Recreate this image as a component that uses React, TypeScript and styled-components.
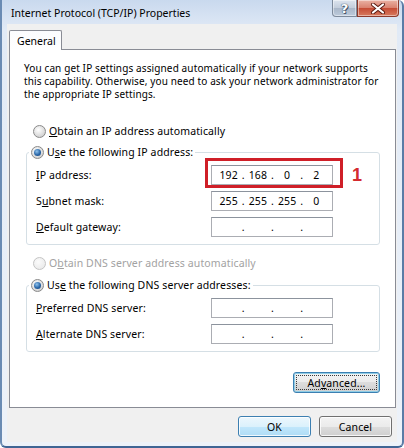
import React from 'react';
import styled, { createGlobalStyle } from 'styled-components';

const GlobalStyle = createGlobalStyle`
  html, body {
    margin: 0;
    padding: 0;
    background: #ffffff;
  }
  body {
    font-family: 'Noto Sans', 'Open Sans', sans-serif;
    font-size: 10px;
    letter-spacing: 0.12px;
    color: #000000;
  }
`;

const Window = styled.div`
  width: 404px;
  height: 448px;
  box-sizing: border-box;
  display: flex;
  flex-direction: column;
  background: linear-gradient(#c9d9ee, #e1eaf6 30px, #edf2f9);
  border-left: 2px solid #6a8bb3;
  border-right: 2px solid #5a7ca6;
  border-bottom: 2px solid #3f6594;
  border-radius: 0 6px 6px 6px;
  overflow: hidden;
`;

const TitleBar = styled.div`
  height: 24px;
  display: flex;
  align-items: flex-start;
`;

const Title = styled.div`
  padding: 6px 0 0 9px;
  line-height: 14px;
  font-size: 10.5px;
  letter-spacing: 0;
  color: #000;
`;

const CaptionButtons = styled.div`
  margin-left: auto;
  margin-right: 3px;
  display: flex;
`;

const CaptionButton = styled.div<{ $kind: 'help' | 'close' }>`
  height: 17px;
  box-sizing: border-box;
  display: flex;
  align-items: center;
  justify-content: center;
  width: ${(p) => (p.$kind === 'help' ? '25px' : '42px')};
  border: 1px solid ${(p) => (p.$kind === 'help' ? '#7d8a9b' : '#8c3a2c')};
  border-top: none;
  border-radius: ${(p) => (p.$kind === 'help' ? '0 0 0 4px' : '0 0 4px 0')};
  background: ${(p) =>
    p.$kind === 'help'
      ? 'linear-gradient(#dce4ee, #c3cddb 50%, #a9b6c8 50%, #bccadb)'
      : 'linear-gradient(#eab2a4, #d9806d 50%, #c54a33 50%, #d77a5e)'};
  box-shadow: inset 0 0 0 1px rgba(255, 255, 255, 0.45);
`;

const HelpGlyph = styled.span`
  font-family: 'DejaVu Sans', sans-serif;
  font-weight: bold;
  font-size: 13px;
  line-height: 13px;
  color: #ffffff;
  text-shadow: 0 0 1px #394a60, 0 0 1px #394a60, 1px 1px 0 #4b5b70;
`;

const Client = styled.div`
  flex: 1;
  margin: 0 5px 4px 5px;
  background: #f0f0f0;
  display: flex;
  flex-direction: column;
  padding: 6px 1px 0 2px;
`;

const TabStrip = styled.div`
  display: flex;
  position: relative;
  z-index: 1;
`;

const Tab = styled.div`
  width: 53px;
  height: 20px;
  box-sizing: border-box;
  border: 1px solid #898c95;
  border-bottom: none;
  border-radius: 2px 2px 0 0;
  background: linear-gradient(#fbfcfe, #ffffff);
  padding: 3px 0 0 7px;
  line-height: 14px;
  font-size: 10.5px;
  letter-spacing: 0;
  margin-bottom: -1px;
`;

const Panel = styled.div`
  height: 359px;
  box-sizing: border-box;
  border: 1px solid #898c95;
  background: #ffffff;
  padding: 12px 15px 0 14px;
  display: flex;
  flex-direction: column;
`;

const Intro = styled.p`
  margin: 0;
  line-height: 13px;
  white-space: nowrap;
`;

const Key = styled.span`
  text-decoration: underline;
  text-underline-offset: 1px;
`;

const RadioRow = styled.label<{ $top: number; $disabled?: boolean }>`
  display: flex;
  align-items: center;
  height: 16px;
  gap: 3px;
  margin: ${(p) => p.$top}px 0 0 9px;
  font-size: 10.5px;
  color: ${(p) => (p.$disabled ? '#a2a2a2' : '#000')};
`;

const Radio = styled.span<{ $checked?: boolean; $disabled?: boolean }>`
  position: relative;
  flex: none;
  width: 13px;
  height: 13px;
  box-sizing: border-box;
  border-radius: 50%;
  border: 1px solid ${(p) => (p.$disabled ? '#c4c4c4' : '#8a8a8a')};
  background: ${(p) =>
    p.$disabled
      ? 'radial-gradient(circle at 40% 35%, #fbfbfb, #e6e6e6)'
      : 'radial-gradient(circle at 40% 35%, #ffffff, #d2d2d2 75%, #c0c0c0)'};

  &::after {
    content: '';
    display: ${(p) => (p.$checked ? 'block' : 'none')};
    position: absolute;
    left: 2px;
    top: 2px;
    width: 7px;
    height: 7px;
    border-radius: 50%;
    background: radial-gradient(circle at 40% 35%, #8fc2ec, #2a67a8 55%, #153f74);
  }
`;

const GroupBox = styled.fieldset<{ $top: number }>`
  margin: ${(p) => p.$top}px 0 0 2px;
  width: 354px;
  box-sizing: border-box;
  border: 1px solid #d5dfe5;
  border-radius: 3px;
  padding: 5px 9px 7px 9px;
  min-width: 0;
`;

const Legend = styled.legend`
  padding: 0 2px;
  margin-left: -7px;
  height: 16px;
  line-height: 16px;
  font-size: 10.5px;
  display: flex;
  align-items: center;
  gap: 3px;
`;

const FieldGrid = styled.div`
  display: grid;
  grid-template-columns: 175px 122px;
  grid-auto-rows: 20px;
  row-gap: 6px;
  align-items: center;
  font-size: 10.5px;
`;

const FieldLabel = styled.span`
  line-height: 14px;
`;

const FieldHolder = styled.div`
  position: relative;
  height: 20px;
`;

const AddressBox = styled.div`
  height: 20px;
  box-sizing: border-box;
  border: 1px solid #abadb3;
  border-top-color: #8c939d;
  background: #ffffff;
  display: flex;
  align-items: center;
  padding: 0 3px 0 4px;
`;

const Octet = styled.span`
  flex: 1;
  text-align: center;
  line-height: 14px;
`;

const Dot = styled.span`
  width: 4px;
  text-align: center;
  line-height: 14px;
`;

const Highlight = styled.div`
  position: absolute;
  left: -6px;
  right: -10px;
  top: -7px;
  bottom: -3px;
  border: 3px solid #cf1f28;
  pointer-events: none;
`;

const Marker = styled.span`
  position: absolute;
  left: 141px;
  top: 0;
  font-family: 'Liberation Sans', Arial, sans-serif;
  font-weight: bold;
  font-size: 18px;
  line-height: 20px;
  color: #d42a2f;
`;

const ButtonRow = styled.div<{ $top: number; $gap?: number }>`
  display: flex;
  justify-content: flex-end;
  gap: ${(p) => p.$gap ?? 0}px;
  margin-top: ${(p) => p.$top}px;
`;

const Footer = styled(ButtonRow)`
  padding-right: 4px;
`;

const Button = styled.button<{ $variant?: 'default' | 'focused' }>`
  position: relative;
  height: 21px;
  box-sizing: border-box;
  padding: 0;
  font-family: inherit;
  font-size: 10.5px;
  letter-spacing: inherit;
  color: #000;
  border-radius: 3px;
  width: ${(p) => (p.$variant === 'focused' ? '87px' : '73px')};
  border: 1px solid ${(p) => (p.$variant ? '#3c7fb1' : '#707070')};
  background: ${(p) =>
    p.$variant === 'default'
      ? 'linear-gradient(#ecf7fd, #dbf1fc 50%, #c1e7fc 50%, #aedcf5)'
      : 'linear-gradient(#f3f3f3, #ebebeb 50%, #dddddd 50%, #cfcfcf)'};
  box-shadow: inset 0 0 0 1px
    ${(p) => (p.$variant === 'focused' ? '#8fcde6' : 'rgba(255,255,255,0.8)')};

  &::after {
    content: '';
    display: ${(p) => (p.$variant === 'focused' ? 'block' : 'none')};
    position: absolute;
    inset: 2px;
    border: 1px dotted #3a3a3a;
    border-radius: 1px;
  }
`;

const Octets: React.FC<{ values?: string[] }> = ({ values = ['', '', '', ''] }) => (
  <AddressBox>
    <Octet>{values[0]}</Octet>
    <Dot>.</Dot>
    <Octet>{values[1]}</Octet>
    <Dot>.</Dot>
    <Octet>{values[2]}</Octet>
    <Dot>.</Dot>
    <Octet>{values[3]}</Octet>
  </AddressBox>
);

const CloseGlyph = () => (
  <svg width="16" height="11" viewBox="0 0 16 11">
    <path
      d="M3 1.5 L13 9.5 M13 1.5 L3 9.5"
      stroke="#5a1a10"
      strokeWidth="4"
      strokeLinecap="round"
    />
    <path
      d="M3 1.5 L13 9.5 M13 1.5 L3 9.5"
      stroke="#ffffff"
      strokeWidth="2.2"
      strokeLinecap="round"
    />
  </svg>
);

const App: React.FC = () => {
  return (
    <>
      <GlobalStyle />
      <Window>
        <TitleBar>
          <Title>Internet Protocol (TCP/IP) Properties</Title>
          <CaptionButtons>
            <CaptionButton $kind='help'>
              <HelpGlyph>?</HelpGlyph>
            </CaptionButton>
            <CaptionButton $kind='close'>
              <CloseGlyph />
            </CaptionButton>
          </CaptionButtons>
        </TitleBar>
        <Client>
          <TabStrip>
            <Tab>General</Tab>
          </TabStrip>
          <Panel>
            <Intro>
              You can get IP settings assigned automatically if your network supports
              <br />
              this capability. Otherwise, you need to ask your network administrator for
              <br />
              the appropriate IP settings.
            </Intro>

            <RadioRow $top={22}>
              <Radio />
              <span>
                <Key>O</Key>btain an IP address automatically
              </span>
            </RadioRow>

            <GroupBox $top={5}>
              <Legend>
                <Radio $checked />
                <span>
                  U<Key>s</Key>e the following IP address:
                </span>
              </Legend>
              <FieldGrid>
                <FieldLabel>
                  <Key>I</Key>P address:
                </FieldLabel>
                <FieldHolder>
                  <Octets values={['192', '168', '0', '2']} />
                  <Highlight />
                  <Marker>1</Marker>
                </FieldHolder>
                <FieldLabel>
                  S<Key>u</Key>bnet mask:
                </FieldLabel>
                <Octets values={['255', '255', '255', '0']} />
                <FieldLabel>
                  <Key>D</Key>efault gateway:
                </FieldLabel>
                <Octets />
              </FieldGrid>
            </GroupBox>

            <RadioRow $top={10} $disabled>
              <Radio $disabled />
              <span>
                O<Key>b</Key>tain DNS server address automatically
              </span>
            </RadioRow>

            <GroupBox $top={6}>
              <Legend>
                <Radio $checked />
                <span>
                  Us<Key>e</Key> the following DNS server addresses:
                </span>
              </Legend>
              <FieldGrid>
                <FieldLabel>
                  <Key>P</Key>referred DNS server:
                </FieldLabel>
                <Octets />
                <FieldLabel>
                  <Key>A</Key>lternate DNS server:
                </FieldLabel>
                <Octets />
              </FieldGrid>
            </GroupBox>

            <ButtonRow $top={20}>
              <Button $variant='focused'>
                Ad<Key>v</Key>anced...
              </Button>
            </ButtonRow>
          </Panel>
          <Footer $top={8} $gap={8}>
            <Button $variant='default'>OK</Button>
            <Button>Cancel</Button>
          </Footer>
        </Client>
      </Window>
    </>
  );
};

export default App;
